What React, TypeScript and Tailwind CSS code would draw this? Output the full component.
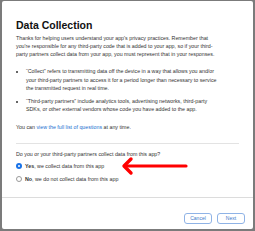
import React from "react";

const font = { fontFamily: '"Liberation Sans", Arial, sans-serif' };

function Radio({ checked }: { checked?: boolean }) {
  return checked ? (
    <span className="w-[6px] h-[6px] rounded-full bg-[#1a73e8] flex items-center justify-center shrink-0">
      <span className="w-[2px] h-[2px] rounded-full bg-white" />
    </span>
  ) : (
    <span className="w-[6px] h-[6px] rounded-full border border-[#9a9a9a] bg-white shrink-0" />
  );
}

export default function App() {
  return (
    <div
      className="w-[255px] h-[231px] bg-[#7b7b7b] pt-[1px] px-[2px] pb-[2px] overflow-hidden"
      style={font}
    >
      <div className="relative w-full h-full bg-white rounded-[2px] flex flex-col">
        <div className="flex-1 px-[14px] pt-[18px] text-[#333] whitespace-nowrap">
          <h1 className="text-[10.5px] leading-[12px] font-bold text-[#111]">Data Collection</h1>
          <p className="mt-[3px] text-[5.3px] leading-[8px]">
            Thanks for helping users understand your app's privacy practices. Remember that
            <br />
            you're responsible for any third-party code that is added to your app, so if your third-
            <br />
            party partners collect data from your app, you must represent that in your responses.
          </p>
          <ul className="mt-[9px] pl-[10px] text-[5.3px] leading-[8.5px] list-disc">
            <li>
              “Collect” refers to transmitting data off the device in a way that allows you and/or
              <br />
              your third-party partners to access it for a period longer than necessary to service
              <br />
              the transmitted request in real time.
            </li>
            <li className="mt-[4px]">
              “Third-party partners” include analytics tools, advertising networks, third-party
              <br />
              SDKs, or other external vendors whose code you have added to the app.
            </li>
          </ul>
          <p className="mt-[9px] text-[5.3px] leading-[8px]">
            You can <span className="text-[#1a6fd0]">view the full list of questions</span> at any time.
          </p>
          <div className="mt-[12px] h-px bg-[#e3e3e3]" />
          <p className="mt-[6px] text-[5.3px] leading-[8px]">
            Do you or your third-party partners collect data from this app?
          </p>
          <div className="mt-[4px] flex items-center gap-[3px] text-[5.3px] leading-[8px]">
            <Radio checked />
            <span>
              <b>Yes</b>, we collect data from this app
            </span>
          </div>
          <div className="mt-[5px] flex items-center gap-[3px] text-[5.3px] leading-[8px]">
            <Radio />
            <span>
              <b>No</b>, we do not collect data from this app
            </span>
          </div>
        </div>
        <div className="h-px bg-[#dcdcdc]" />
        <div className="flex justify-end gap-[5px] px-[8px] pt-[15px] pb-[5px]">
          <button className="w-[28px] h-[11px] rounded-[3px] border border-[#8fb3e6] text-[#3b78c9] text-[5px] leading-[9px]">
            Cancel
          </button>
          <button className="w-[28px] h-[11px] rounded-[3px] border border-[#8fb3e6] text-[#3b78c9] text-[5px] leading-[9px]">
            Next
          </button>
        </div>
        <svg
          className="absolute left-[118px] top-[155px]"
          width="70"
          height="20"
          viewBox="0 0 70 20"
        >
          <path d="M5 10 H66" stroke="#ff0000" strokeWidth="3.2" strokeLinecap="round" />
          <path
            d="M11 3 L4 10 L11 17"
            stroke="#ff0000"
            strokeWidth="3.4"
            fill="none"
            strokeLinecap="round"
            strokeLinejoin="round"
          />
        </svg>
      </div>
    </div>
  );
}
